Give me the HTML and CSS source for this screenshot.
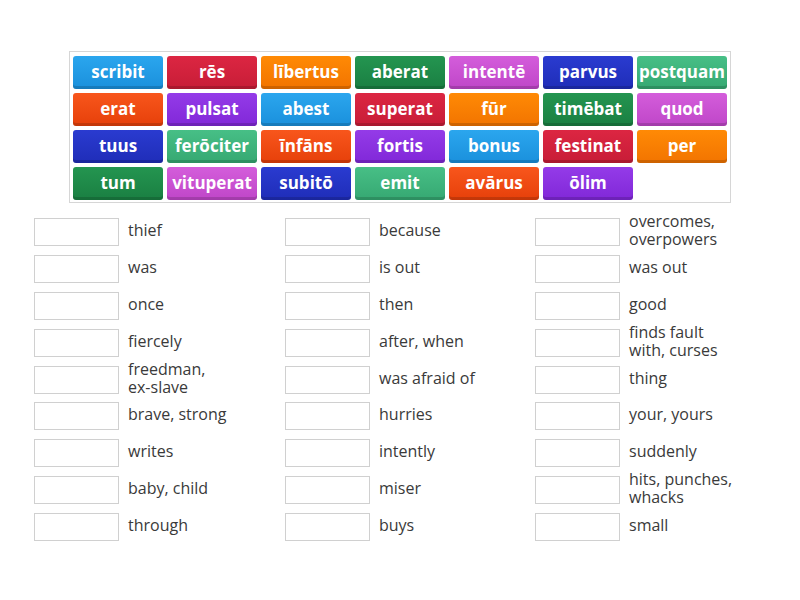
FILE: index.html
```html
<!DOCTYPE html>
<html>
<head>
<meta charset="utf-8">
<link rel="stylesheet" href="styles.css">
</head>
<body>
<div class="bank">
  <div class="tile lb">scribit</div>
  <div class="tile rd">rēs</div>
  <div class="tile or">lībertus</div>
  <div class="tile gr">aberat</div>
  <div class="tile oc">intentē</div>
  <div class="tile db">parvus</div>
  <div class="tile tl">postquam</div>
  <div class="tile orr">erat</div>
  <div class="tile pu">pulsat</div>
  <div class="tile lb">abest</div>
  <div class="tile rd">superat</div>
  <div class="tile or">fūr</div>
  <div class="tile gr">timēbat</div>
  <div class="tile oc">quod</div>
  <div class="tile db">tuus</div>
  <div class="tile tl">ferōciter</div>
  <div class="tile orr">īnfāns</div>
  <div class="tile pu">fortis</div>
  <div class="tile lb">bonus</div>
  <div class="tile rd">festinat</div>
  <div class="tile or">per</div>
  <div class="tile gr">tum</div>
  <div class="tile oc">vituperat</div>
  <div class="tile db">subitō</div>
  <div class="tile tl">emit</div>
  <div class="tile orr">avārus</div>
  <div class="tile pu">ōlim</div>
</div>
<div class="answers">
  <div class="item"><div class="slot"></div><div class="def">thief</div></div>
  <div class="item"><div class="slot"></div><div class="def">because</div></div>
  <div class="item"><div class="slot"></div><div class="def">overcomes,<br>overpowers</div></div>
  <div class="item"><div class="slot"></div><div class="def">was</div></div>
  <div class="item"><div class="slot"></div><div class="def">is out</div></div>
  <div class="item"><div class="slot"></div><div class="def">was out</div></div>
  <div class="item"><div class="slot"></div><div class="def">once</div></div>
  <div class="item"><div class="slot"></div><div class="def">then</div></div>
  <div class="item"><div class="slot"></div><div class="def">good</div></div>
  <div class="item"><div class="slot"></div><div class="def">fiercely</div></div>
  <div class="item"><div class="slot"></div><div class="def">after, when</div></div>
  <div class="item"><div class="slot"></div><div class="def">finds fault<br>with, curses</div></div>
  <div class="item"><div class="slot"></div><div class="def">freedman,<br>ex-slave</div></div>
  <div class="item"><div class="slot"></div><div class="def">was afraid of</div></div>
  <div class="item"><div class="slot"></div><div class="def">thing</div></div>
  <div class="item"><div class="slot"></div><div class="def">brave, strong</div></div>
  <div class="item"><div class="slot"></div><div class="def">hurries</div></div>
  <div class="item"><div class="slot"></div><div class="def">your, yours</div></div>
  <div class="item"><div class="slot"></div><div class="def">writes</div></div>
  <div class="item"><div class="slot"></div><div class="def">intently</div></div>
  <div class="item"><div class="slot"></div><div class="def">suddenly</div></div>
  <div class="item"><div class="slot"></div><div class="def">baby, child</div></div>
  <div class="item"><div class="slot"></div><div class="def">miser</div></div>
  <div class="item"><div class="slot"></div><div class="def">hits, punches,<br>whacks</div></div>
  <div class="item"><div class="slot"></div><div class="def">through</div></div>
  <div class="item"><div class="slot"></div><div class="def">buys</div></div>
  <div class="item"><div class="slot"></div><div class="def">small</div></div>
</div>
</body>
</html>
```
FILE: styles.css
```css
html, body {
  margin: 0;
  padding: 0;
  background: #ffffff;
  font-family: "Open Sans", "Liberation Sans", sans-serif;
}
.bank {
  width: 654px;
  margin: 51px auto 0;
  padding: 4px 3px 2px 3px;
  border: 1px solid #d6d6d6;
  display: flex;
  flex-wrap: wrap;
  gap: 4px;
}
.tile {
  width: 90px;
  height: 33px;
  box-sizing: border-box;
  border-radius: 3px;
  color: #ffffff;
  font-weight: 700;
  font-size: 17px;
  display: flex;
  align-items: center;
  justify-content: center;
  white-space: nowrap;
  padding-bottom: 2px;
  box-shadow: inset 0 -3px 0 rgba(0, 0, 0, 0.15);
}
.lb { background: linear-gradient(#2ba6ee, #1a90dc); }
.rd { background: linear-gradient(#dc2642, #c71d37); }
.or { background: linear-gradient(#ff8a05, #f27400); }
.gr { background: linear-gradient(#249550, #1a7f42); }
.oc { background: linear-gradient(#d45ddb, #bf46c8); }
.db { background: linear-gradient(#2a3bd0, #1f2db8); }
.tl { background: linear-gradient(#47bf86, #36a872); }
.orr { background: linear-gradient(#f8561c, #e6400a); }
.pu { background: linear-gradient(#943be8, #8128d8); }
.answers {
  margin: 15px 0 0 34px;
  display: grid;
  grid-template-columns: 251px 250px 250px;
  row-gap: 8.9px;
}
.item {
  display: flex;
  align-items: center;
  gap: 9px;
  height: 28px;
}
.slot {
  width: 85px;
  height: 28px;
  box-sizing: border-box;
  border: 1px solid #d0d0d0;
  flex: none;
}
.def {
  font-size: 16px;
  line-height: 18px;
  color: #3a3a3a;
  white-space: nowrap;
  margin-bottom: 4px;
}
```
